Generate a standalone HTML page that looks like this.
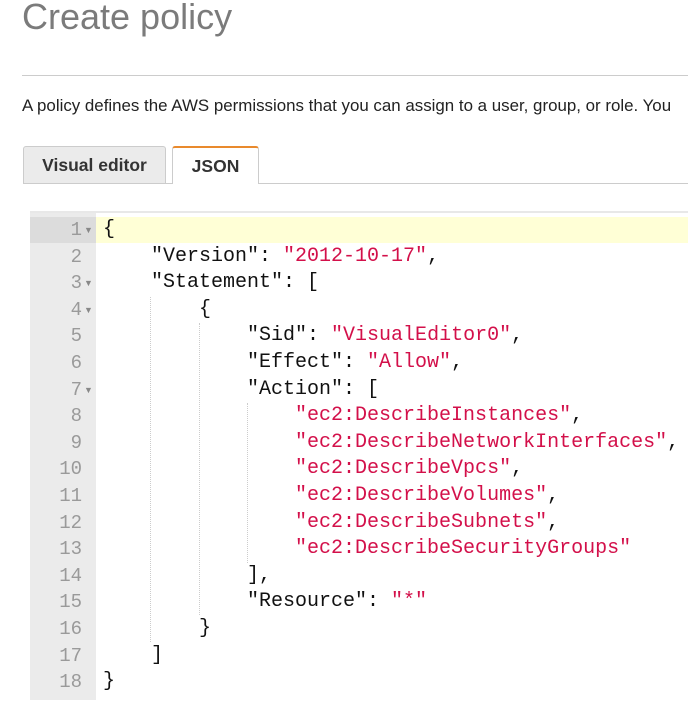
<!DOCTYPE html>
<html><head><style>
body{margin:0;width:688px;height:705px;background:#fff;overflow:hidden;position:relative;font-family:"Liberation Sans",sans-serif}
.t{position:absolute;left:22px;top:-4px;font-size:36px;color:#7b7b7b;white-space:nowrap}
.hr{position:absolute;left:22px;right:0;top:75px;height:1px;background:#ccc}
.p{position:absolute;left:22px;top:96px;font-size:16.9px;color:#222;white-space:nowrap}
.tab{position:absolute;top:146px;height:37px;box-sizing:border-box;font-weight:bold;font-size:17.5px;color:#333;text-align:center;line-height:36px;border:1px solid #ccc;border-bottom:none;border-radius:3px 3px 0 0}
.tl{position:absolute;left:23px;right:0;top:183px;height:1px;background:#ccc}
.ed{position:absolute;left:30px;right:0;top:211px;bottom:0;border-top:2px solid #e8e8e8}
.gut{position:absolute;left:30px;width:66px;top:213px;bottom:5px;background:#ebebeb}
.hl{position:absolute;left:96px;right:0;top:217px;height:26px;background:#ffffd6}
.hg{position:absolute;left:30px;width:66px;top:217px;height:26px;background:#dcdcdc}
.ln{position:absolute;left:30px;width:52px;text-align:right;font-family:"Liberation Mono",monospace;font-size:19px;color:#9a9a9a;height:26.6px;line-height:26.6px}
.ar{position:absolute;left:84px;font-size:9px;color:#888}
.c{position:absolute;left:103px;font-family:"Liberation Mono",monospace;font-size:20px;color:#111;white-space:pre;height:26.6px;line-height:26.6px}
.s{color:#d3104a}
.g{position:absolute;width:0;border-left:1px dotted #ccc}
</style></head><body>
<div class="t">Create policy</div>
<div class="hr"></div>
<div class="p">A policy defines the AWS permissions that you can assign to a user, group, or role. You</div>
<div class="tl"></div>
<div class="tab" style="left:23px;width:143px;background:#ebebeb">Visual editor</div>
<div class="tab" style="left:172px;width:87px;background:#fff;border-top:2px solid #e98a2d;height:38px">JSON</div>
<div class="ed"></div>
<div class="gut"></div>
<div class="hl"></div>
<div class="hg"></div>
<div class="g" style="left:150px;top:297px;height:345px"></div>
<div class="g" style="left:199px;top:323px;height:292px"></div>
<div class="g" style="left:247px;top:403px;height:160px"></div>
<div id="L"></div>
<script>
var code=[
'{',
'    "Version": <s>"2012-10-17"</s>,',
'    "Statement": [',
'        {',
'            "Sid": <s>"VisualEditor0"</s>,',
'            "Effect": <s>"Allow"</s>,',
'            "Action": [',
'                <s>"ec2:DescribeInstances"</s>,',
'                <s>"ec2:DescribeNetworkInterfaces"</s>,',
'                <s>"ec2:DescribeVpcs"</s>,',
'                <s>"ec2:DescribeVolumes"</s>,',
'                <s>"ec2:DescribeSubnets"</s>,',
'                <s>"ec2:DescribeSecurityGroups"</s>',
'            ],',
'            "Resource": <s>"*"</s>',
'        }',
'    ]',
'}'];
var h='';
for(var i=0;i<code.length;i++){
 var y=217+i*26.6;
 h+='<div class="ln" style="top:'+y+'px">'+(i+1)+'</div>';
 if([0,2,3,6].indexOf(i)>=0)h+='<div class="ar" style="top:'+(y+8)+'px">&#9660;</div>';
 h+='<div class="c" style="top:'+y+'px">'+code[i].replace(/<s>/g,'<span class="s">').replace(/<\/s>/g,'</span>')+'</div>';
}
document.getElementById('L').innerHTML=h;
</script>
</body></html>
